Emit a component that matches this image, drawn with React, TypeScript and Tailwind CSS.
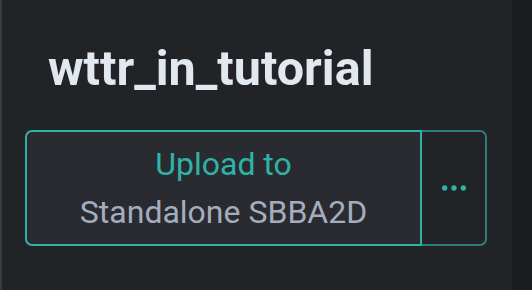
import { Ellipsis } from "lucide-react";

export default function App() {
  return (
    <div className="flex h-[290px] w-[532px] bg-[#1c1d20] font-['Roboto',sans-serif]">
      <div className="h-full w-[512px] border-l-2 border-[#3b3c41] bg-[#222327] pl-[23px] pr-[25px]">
        <h1 className="pl-[23px] pt-[41px] text-[48.5px] font-bold leading-[56px] text-[#e2e8f0]">
          wttr_in_tutorial
        </h1>

        <div className="mt-[33px] flex h-[116px]">
          <button className="flex flex-1 flex-col items-center justify-center rounded-l-[7px] border-2 border-[#2fb3a8] bg-[#2a2b30] text-[32px] leading-[48px]">
            <span className="text-[#2fb3a8]">Upload to</span>
            <span className="text-[#a4adbd]">Standalone SBBA2D</span>
          </button>
          <button
            aria-label="More options"
            className="flex w-[65px] items-center justify-center rounded-r-[7px] border-y-2 border-r-2 border-[#2c7f7b] bg-[#222327] text-[#2fb3a8]"
          >
            <Ellipsis size={32} strokeWidth={2} />
          </button>
        </div>
      </div>
    </div>
  );
}
